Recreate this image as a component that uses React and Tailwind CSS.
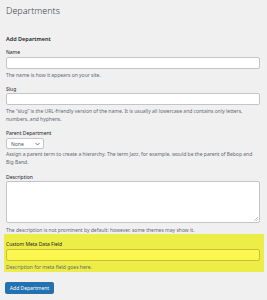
import React from "react";

const lbl = "h-[8px] leading-[8px] text-[5px] text-[#1d2327]";
const desc = "leading-[8px] text-[5px] text-[#646970]";

export default function App() {
  return (
    <div
      className="min-h-[300px] w-[267px] bg-[#f0f0f1] pl-[6px] pr-[7px] pt-[5px]"
      style={{ fontFamily: '"Noto Sans", "Open Sans", sans-serif' }}
    >
      <h1 className="h-[12px] text-[9px] leading-[12px] font-light text-[#3c434a]">Departments</h1>
      <h2 className="mt-[18px] h-[8px] text-[5.5px] leading-[8px] font-semibold text-[#1d2327]">Add Department</h2>

      <div className={`mt-[5px] ${lbl}`}>Name</div>
      <div className="mt-[1px] h-[12px] rounded-[2px] border border-[#c3c4c7] bg-white"></div>
      <p className={`mt-[2px] ${desc}`}>The name is how it appears on your site.</p>

      <div className={`mt-[6px] ${lbl}`}>Slug</div>
      <div className="h-[12px] rounded-[2px] border border-[#c3c4c7] bg-white"></div>
      <p className={`mt-[2px] ${desc}`}>
        The “slug” is the URL-friendly version of the name. It is usually all lowercase and contains only letters, numbers, and hyphens.
      </p>

      <div className={`mt-[6px] ${lbl}`}>Parent Department</div>
      <div className="mt-[1px] flex h-[11px] w-[38px] items-center justify-between rounded-[2px] border border-[#c3c4c7] bg-white pl-[4px] pr-[3px]">
        <span className="text-[5px] leading-[8px] text-[#50575e]">None</span>
        <svg width="5" height="4" viewBox="0 0 10 6" fill="none" stroke="#50575e" strokeWidth="1.6">
          <path d="M1 1l4 4 4-4" />
        </svg>
      </div>
      <p className={`mt-[1px] ${desc}`}>
        Assign a parent term to create a hierarchy. The term Jazz, for example, would be the parent of Bebop and Big Band.
      </p>

      <div className={`mt-[7px] ${lbl}`}>Description</div>
      <div className="relative h-[42px] rounded-[2px] border border-[#c3c4c7] bg-white">
        <svg className="absolute bottom-[1px] right-[1px]" width="4" height="4" viewBox="0 0 4 4" stroke="#a7aaad" strokeWidth="0.6">
          <path d="M0 4L4 0M2 4L4 2" />
        </svg>
      </div>
      <p className={`mt-[3px] ${desc}`}>The description is not prominent by default; however, some themes may show it.</p>

      <div className="-ml-[2px] -mr-[4px] h-[38px] bg-[#eded48] pl-[2px] pr-[4px] pt-[6px]">
        <div className={lbl}>Custom Meta Data Field</div>
        <div className="mt-[1px] h-[12px] rounded-[2px] border border-[#c8c03a] bg-[#fbf74f]"></div>
        <p className={`mt-[2px] ${desc} text-[#6b6a3a]`}>Description for meta field goes here.</p>
      </div>

      <button className="-ml-[1px] mt-[4px] h-[12px] w-[49px] rounded-[2px] bg-[#2271b1] text-[5px] leading-[12px] text-white">
        Add Department
      </button>
    </div>
  );
}
